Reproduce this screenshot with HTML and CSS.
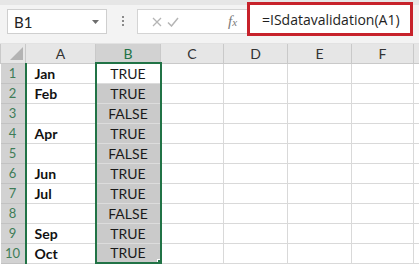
FILE: index.html
```html
<!DOCTYPE html>
<html lang="en">
<head>
  <meta charset="UTF-8" />
  <title>ISdatavalidation</title>
  <link rel="stylesheet" href="styles.css">
</head>
<body>
  <div class="formula-bar">
    <div class="name-box">
      <span>B1</span>
      <svg class="caret" width="7" height="4" viewBox="0 0 7 4"><path d="M0 0H7L3.5 4Z" fill="#6d6d6d"/></svg>
    </div>
    <div class="grip">
      <i></i><i></i><i></i>
    </div>
    <div class="input-box">
      <svg class="icon" width="10" height="10" viewBox="0 0 10 10"><path d="M1 1L9 9M9 1L1 9" stroke="#b5b5b5" stroke-width="1.3"/></svg>
      <svg class="icon" width="12" height="10" viewBox="0 0 12 10"><path d="M1 5.5L4.5 9L11 1" stroke="#b5b5b5" stroke-width="1.5" fill="none"/></svg>
      <span class="fx">f<small>x</small></span>
    </div>
    <div class="formula">=ISdatavalidation(A1)</div>
  </div>

  <table class="sheet">
    <colgroup>
      <col class="w-head"><col class="w-a"><col class="w-b"><col class="w-c"><col class="w-d"><col class="w-e"><col class="w-f"><col>
    </colgroup>
    <thead>
      <tr>
        <th class="corner"><svg width="13" height="13" viewBox="0 0 13 13"><path d="M13 0V13H0Z" fill="#b3b3b3"/></svg></th>
        <th>A</th><th class="sel">B</th><th>C</th><th>D</th><th>E</th><th>F</th><th></th>
      </tr>
    </thead>
    <tbody id="rows"></tbody>
  </table>

  <script>
    const data = [
      ["Jan", "TRUE"], ["Feb", "TRUE"], ["", "FALSE"], ["Apr", "TRUE"], ["", "FALSE"],
      ["Jun", "TRUE"], ["Jul", "TRUE"], ["", "FALSE"], ["Sep", "TRUE"], ["Oct", "TRUE"]
    ];
    const body = document.getElementById("rows");
    data.forEach((row, i) => {
      const tr = document.createElement("tr");
      let cls = "b";
      if (i === 0) cls += " active";
      if (i === data.length - 1) cls += " last";
      tr.innerHTML = `<th class="row-num">${i + 1}</th><td class="a">${row[0]}</td><td class="${cls}">${row[1]}${i === data.length - 1 ? "<span class='handle'></span>" : ""}</td><td></td><td></td><td></td><td></td><td class="edge"></td>`;
      body.appendChild(tr);
    });
  </script>
</body>
</html>
```

FILE: styles.css
```css
body {
  margin: 0;
  width: 419px;
  height: 269px;
  overflow: hidden;
  background: #ffffff;
  font-family: Lato, 'Noto Sans', sans-serif;
}

.formula-bar {
  height: 44px;
  display: flex;
  align-items: flex-start;
  background: linear-gradient(180deg, #e6e6e6 0, #e6e6e6 5px, #f3f3f3 5px);
  box-sizing: border-box;
  border-bottom: 1px solid #e2e2e2;
}

.name-box {
  margin: 9px 0 0 7px;
  width: 100px;
  height: 25px;
  box-sizing: border-box;
  background: #ffffff;
  border: 1px solid #cfcfcf;
  display: flex;
  align-items: center;
  justify-content: space-between;
  padding: 0 7px 0 6px;
  font-size: 15px;
  color: #222;
}

.grip {
  margin: 16px 0 0 15px;
  display: flex;
  flex-direction: column;
  gap: 2px;
}

.grip i {
  display: block;
  width: 2px;
  height: 2px;
  background: #8a8a8a;
}

.input-box {
  margin: 9px 0 0 13px;
  width: 110px;
  height: 25px;
  box-sizing: border-box;
  background: #ffffff;
  border: 1px solid #d4d4d4;
  border-right: none;
  display: flex;
  align-items: center;
  padding-left: 14px;
  gap: 5px;
}

.fx {
  margin-left: 44px;
  font-family: 'Liberation Serif', serif;
  font-style: italic;
  font-size: 15px;
  color: #7a7a7a;
}

.fx small {
  font-size: 11px;
}

.formula {
  margin-top: 2px;
  width: 166px;
  height: 34px;
  box-sizing: border-box;
  background: #ffffff;
  border: 3px solid #c7222b;
  padding-left: 12px;
  display: flex;
  align-items: center;
  font-family: 'Open Sans', sans-serif;
  font-size: 14px;
  color: #1e1e1e;
}

.sheet {
  border-collapse: collapse;
  table-layout: fixed;
  width: 430px;
}

.w-head { width: 25px; }
.w-a { width: 70px; }
.w-b { width: 65px; }
.w-c { width: 63px; }
.w-d { width: 64px; }
.w-e { width: 64px; }
.w-f { width: 62px; }

.sheet th,
.sheet td {
  padding: 0;
  border: 1px solid #d9d9d9;
  overflow: hidden;
  white-space: nowrap;
}

.sheet thead th {
  height: 18px;
  background: #e6e6e6;
  border-color: #c9c9c9;
  border-top: none;
  font-weight: normal;
  font-size: 14px;
  color: #333;
  text-align: center;
}

.sheet thead th.sel {
  background: #d2d2d2;
  color: #217346;
  border-bottom: 2px solid #217346;
}

.sheet .corner {
  text-align: right;
  vertical-align: bottom;
  line-height: 0;
}

.sheet .corner svg {
  margin: 0 2px 3px 0;
}

.sheet tbody tr {
  height: 20px;
}

.sheet .row-num {
  background: #d2d2d2;
  border-color: #c2c2c2;
  border-left: none;
  border-right: 2px solid #217346;
  font-weight: normal;
  font-size: 13px;
  color: #3e7d57;
  text-align: center;
}

.sheet td.a {
  font-weight: bold;
  font-size: 14px;
  color: #111;
  padding-left: 8px;
}

.sheet td.b {
  position: relative;
  background: #cacaca;
  border-left: 2px solid #217346;
  border-right: 2px solid #217346;
  border-top-color: #dcdcdc;
  border-bottom-color: #dcdcdc;
  text-align: center;
  font-size: 14px;
  color: #1a1a1a;
}

.sheet td.b.active {
  background: #ffffff;
  border-top: 2px solid #217346;
}

.sheet td.b.last {
  border-bottom: 2px solid #217346;
}

.handle {
  position: absolute;
  right: -4px;
  bottom: -4px;
  width: 5px;
  height: 5px;
  background: #217346;
  border: 1px solid #ffffff;
}

.sheet td.edge {
  border-right: none;
}
```
